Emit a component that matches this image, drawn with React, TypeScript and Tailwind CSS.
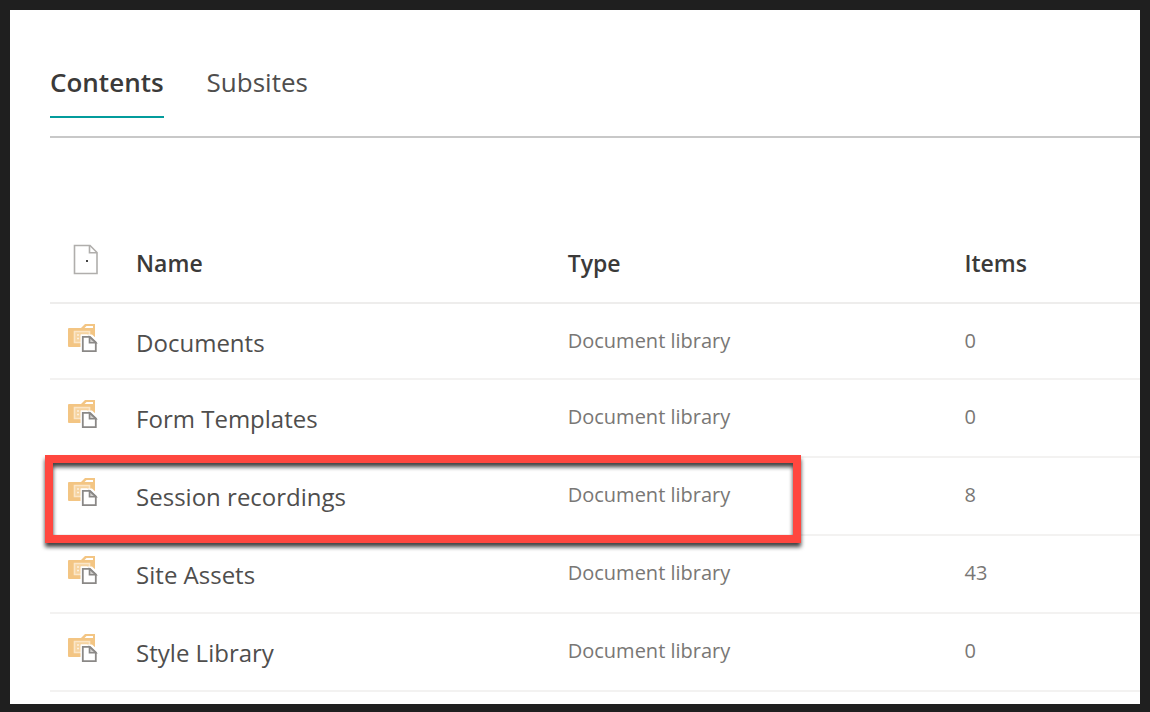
type Library = {
  name: string;
  type: string;
  items: number;
  highlighted?: boolean;
};

const libraries: Library[] = [
  { name: "Documents", type: "Document library", items: 0 },
  { name: "Form Templates", type: "Document library", items: 0 },
  { name: "Session recordings", type: "Document library", items: 8, highlighted: true },
  { name: "Site Assets", type: "Document library", items: 43 },
  { name: "Style Library", type: "Document library", items: 0 },
];

function FileIcon() {
  return (
    <svg width="26" height="32" viewBox="0 0 26 32" fill="none" aria-hidden="true">
      <path d="M1.5 1.5H17L24 8.5V29.5H1.5Z" stroke="#b0aeac" strokeWidth="1.6" />
      <path d="M16.5 1.5V8.7H24" stroke="#b0aeac" strokeWidth="1.6" />
      <rect x="13" y="16" width="2" height="2" fill="#444" />
    </svg>
  );
}

function LibraryIcon() {
  return (
    <svg width="30" height="30" viewBox="0 0 30 30" fill="none" aria-hidden="true">
      <path d="M1 4H13L17 0H27V23H1Q0 23 0 22V5Q0 4 1 4Z" fill="#f3c583" />
      <path d="M16.5 4L18.5 2H25V4Z" fill="#fff" />
      <path d="M6.5 7.5H21.5V18.5H6.5Z" fill="#f6d3a0" stroke="#fbe6c8" strokeWidth="1.6" />
      <path d="M9 11H11M13 11H19M9 14.5H11M13 14.5H19" stroke="#fdf1de" strokeWidth="1.5" />
      <path d="M12.5 10.5H24L30 16V29H12.5Z" fill="#fff" />
      <path d="M14.8 12.8H22L27.8 18.5V27.2H14.8Z" fill="#fff" stroke="#8a8886" strokeWidth="1.8" />
      <path d="M21.5 13V18.7H27.8Z" fill="#d2d0ce" stroke="#8a8886" strokeWidth="1.6" />
    </svg>
  );
}

function Tabs() {
  return (
    <nav className="flex gap-[43px] border-b-2 border-[#c8c8c8] pb-[18px] text-[26px] leading-8">
      <a
        href="#contents"
        aria-current="page"
        className="border-b-2 border-[#039c9c] pb-[18px] font-semibold text-[#3b3a39]"
      >
        Contents
      </a>
      <a href="#subsites" className="text-[#4f4e4d]">
        Subsites
      </a>
    </nav>
  );
}

export default function App() {
  return (
    <div className="min-h-screen bg-[#1f1f1f] px-[10px] pt-[10px] pb-2 font-['Open_Sans','Noto_Sans',sans-serif]">
      <main className="min-h-[694px] overflow-hidden bg-white pt-14 pl-10">
        <Tabs />

        <table className="mt-[88px] w-full table-fixed border-separate border-spacing-0 text-left">
          <colgroup>
            <col className="w-[7.9%]" />
            <col className="w-[39.6%]" />
            <col className="w-[36.4%]" />
            <col />
          </colgroup>
          <thead>
            <tr className="h-[78px] align-top text-[23px] leading-8 text-[#3b3a39] *:border-b-2 *:border-[#eeedec] *:font-semibold">
              <th scope="col" aria-label="File type" className="pt-[18px] pl-[23px]">
                <FileIcon />
              </th>
              <th scope="col" className="pt-[21px]">Name</th>
              <th scope="col" className="pt-[21px]">Type</th>
              <th scope="col" className="pt-[21px]">Items</th>
            </tr>
          </thead>
          <tbody>
            {libraries.map((library) => (
              <tr
                key={library.name}
                className="relative h-[78px] align-top text-xl text-[#797775] *:border-b-2 *:border-[#f3f2f1] first:h-[76px]"
              >
                <td className="pt-5 pl-[18px]">
                  <LibraryIcon />
                  {library.highlighted && (
                    <div className="pointer-events-none absolute -top-[3px] -bottom-[7px] -left-[5px] w-[69.4%] border-8 border-[#ff473f] drop-shadow-[0_4px_2px_rgba(0,0,0,0.75)]" />
                  )}
                </td>
                <td className="pt-[23px]">
                  <a href="#library" className="text-2xl text-[#4f4e4d]">
                    {library.name}
                  </a>
                </td>
                <td className="pt-[23px]">{library.type}</td>
                <td className="pt-[23px]">{library.items}</td>
              </tr>
            ))}
          </tbody>
        </table>
      </main>
    </div>
  );
}
